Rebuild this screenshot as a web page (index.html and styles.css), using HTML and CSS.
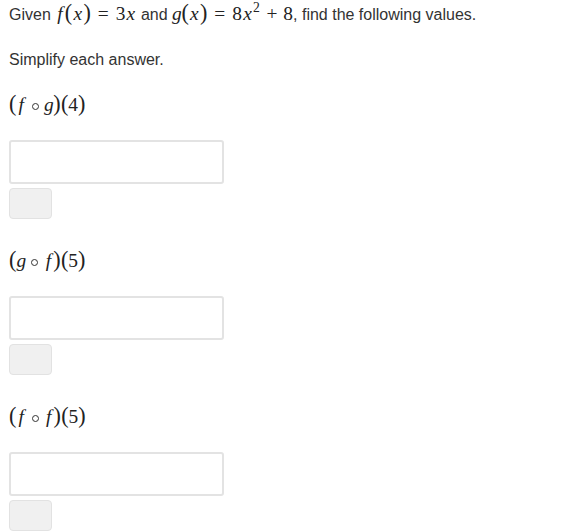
FILE: index.html
```html
<!DOCTYPE html>
<html>
<head>
<meta charset="utf-8">
<link rel="stylesheet" href="styles.css">
</head>
<body>
<div class="page">
  <p class="text first">Given <span class="m"><i class="f">f</i><span class="p">(</span><i class="x">x</i><span class="p">)</span><span class="rel">=</span><span class="n">3</span><i class="x">x</i></span> and <span class="m"><i class="g">g</i><span class="p">(</span><i class="x">x</i><span class="p">)</span><span class="rel">=</span><span class="n">8</span><i class="x">x</i><sup class="sup">2</sup><span class="bin">+</span><span class="n">8</span></span>, find the following values.</p>
  <p class="text second">Simplify each answer.</p>

  <div class="part">
    <div class="mh m"><span class="p">(</span><i class="f">f</i><span class="circ"></span><i class="g">g</i><span class="p">)</span><span class="p">(</span><span class="n">4</span><span class="p">)</span></div>
    <div class="answer"></div>
    <div class="btn"></div>
  </div>
  <div class="part">
    <div class="mh m"><span class="p">(</span><i class="g">g</i><span class="circ"></span><i class="f">f</i><span class="p">)</span><span class="p">(</span><span class="n">5</span><span class="p">)</span></div>
    <div class="answer"></div>
    <div class="btn"></div>
  </div>
  <div class="part">
    <div class="mh m"><span class="p">(</span><i class="f">f</i><span class="circ"></span><i class="f">f</i><span class="p">)</span><span class="p">(</span><span class="n">5</span><span class="p">)</span></div>
    <div class="answer"></div>
    <div class="btn"></div>
  </div>
</div>
</body>
</html>
```
FILE: styles.css
```css
html, body {
  margin: 0;
  padding: 0;
  background: #fff;
}
.page {
  padding: 4px 9px 0 9px;
  display: flex;
  flex-direction: column;
  color: #333;
}
.text {
  margin: 0;
  font-family: "Liberation Sans", Arial, sans-serif;
  font-size: 16px;
  line-height: 24px;
  height: 24px;
  white-space: nowrap;
}
.first {
  line-height: 22px;
  height: 22px;
}
.second {
  margin-top: 22px;
}
.m {
  font-family: "Liberation Serif", "Times New Roman", serif;
  font-size: 19.4px;
  color: #222;
}
.text .m {
  line-height: 0;
}
.m > * {
  display: inline-block;
  line-height: 0;
  text-align: center;
}
.m i {
  font-style: italic;
}
.m .f { width: 0.49em; }
.m .x { width: 0.572em; }
.m .g { width: 0.477em; }
.m .n { width: 0.5em; }
.m .p {
  font-size: 1.14em;
  width: 0.341em;
}
.m .rel {
  width: 0.778em;
  padding: 0 0.25em;
}
.m .bin {
  width: 0.778em;
  padding: 0 0.2em;
}
.m .sup {
  font-size: 0.707em;
  width: 0.55em;
  vertical-align: 8px;
  text-align: left;
}
.circ {
  box-sizing: border-box;
  width: 7px;
  height: 7px;
  margin: 0 5.5px;
  border: 1.2px solid #333;
  border-radius: 50%;
  vertical-align: 1px;
}
.part {
  display: flex;
  flex-direction: column;
  align-items: flex-start;
  padding-bottom: 28.6px;
}
.part:first-of-type {
  margin-top: 19.6px;
}
.mh {
  line-height: 26px;
  height: 26px;
  white-space: nowrap;
}
.answer {
  margin-top: 22.4px;
  width: 211px;
  height: 40px;
  border: 2px solid #e3e3e3;
  border-radius: 3px;
  background: #fff;
}
.btn {
  margin-top: 4px;
  width: 41px;
  height: 29px;
  border: 1px solid #e2e2e2;
  border-radius: 4px;
  background: #f0f0f0;
}
```
